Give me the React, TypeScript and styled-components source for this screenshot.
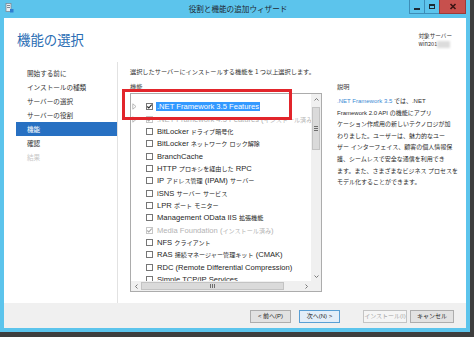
import styled, { createGlobalStyle } from 'styled-components';

const GlobalStyle = createGlobalStyle`
  html, body {
    margin: 0;
    padding: 0;
  }
  body {
    background: #3e3e3e;
    width: 474px;
    height: 337px;
    overflow: hidden;
    font-family: 'Liberation Sans', 'Noto Sans CJK JP', sans-serif;
    color: #2b2b2b;
  }
`;

type Feature = {
  label: string;
  expand?: boolean;
  checked?: boolean;
  disabled?: boolean;
  selected?: boolean;
};

const features: Feature[] = [
  { label: '.NET Framework 3.5 Features', expand: true, checked: true, selected: true },
  { label: '.NET Framework 4.5 Features (インストール済み)', expand: true, checked: true, disabled: true },
  { label: 'BitLocker ドライブ暗号化' },
  { label: 'BitLocker ネットワーク ロック解除' },
  { label: 'BranchCache' },
  { label: 'HTTP プロキシを経由した RPC' },
  { label: 'IP アドレス管理 (IPAM) サーバー' },
  { label: 'iSNS サーバー サービス' },
  { label: 'LPR ポート モニター' },
  { label: 'Management OData IIS 拡張機能' },
  { label: 'Media Foundation (インストール済み)', checked: true, disabled: true },
  { label: 'NFS クライアント' },
  { label: 'RAS 接続マネージャー管理キット (CMAK)' },
  { label: 'RDC (Remote Differential Compression)' },
  { label: 'Simple TCP/IP Services' },
];

const steps = ['開始する前に', 'インストールの種類', 'サーバーの選択', 'サーバーの役割', '機能', '確認', '結果'];

// japanese runs render narrower than latin in the original UI font
const mixed = (s: string) =>
  s.split(/([\u3000-\u30ff\u4e00-\u9fff\uff00-\uffef]+)/).map((part, i) =>
    i % 2 ? <Jp key={i}>{part}</Jp> : part
  );

const Chevron = ({ dir }: { dir: 'up' | 'down' | 'left' | 'right' }) => {
  const pts = {
    up: '1.5,4.5 3.5,2.5 5.5,4.5',
    down: '1.5,2.5 3.5,4.5 5.5,2.5',
    left: '4.5,1.5 2.5,3.5 4.5,5.5',
    right: '2.5,1.5 4.5,3.5 2.5,5.5',
  }[dir];
  return (
    <svg width="7" height="7" viewBox="0 0 7 7">
      <polyline points={pts} fill="none" stroke="#6b6b6b" strokeWidth="0.9" />
    </svg>
  );
};

const CheckBox = ({ checked, disabled }: { checked?: boolean; disabled?: boolean }) => (
  <Box $disabled={disabled}>
    {checked && (
      <svg width="7" height="7" viewBox="0 0 7 7">
        <path
          d="M1.3 3.5 L2.8 5 L5.7 1.6"
          fill="none"
          stroke={disabled ? '#a8a8a8' : '#222'}
          strokeWidth="1.1"
        />
      </svg>
    )}
  </Box>
);

export default function App() {
  return (
    <>
      <GlobalStyle />
      <Window>
        <TitleBar>
          <AppIcon width="9" height="10" viewBox="0 0 9 10">
            <rect x="1" y="0.5" width="5" height="8" fill="#e9eef2" stroke="#7d8a96" strokeWidth="0.8" />
            <rect x="2" y="2" width="3" height="1" fill="#7d8a96" />
            <rect x="2" y="4" width="3" height="1" fill="#7d8a96" />
            <rect x="5" y="6" width="3.5" height="3.5" fill="#2f7fd1" />
          </AppIcon>
          <Title>役割と機能の追加ウィザード</Title>
          <Controls>
            <CtrlButton>
              <MinGlyph />
            </CtrlButton>
            <CtrlButton>
              <MaxGlyph />
            </CtrlButton>
            <CloseButton>
              <svg width="8" height="7" viewBox="0 0 8 7">
                <path d="M1.5 1 L6.5 6 M6.5 1 L1.5 6" stroke="#3a1414" strokeWidth="1.6" />
              </svg>
            </CloseButton>
          </Controls>
        </TitleBar>

        <Client>
          <Header>
            <PageTitle>機能の選択</PageTitle>
            <Target>
              <div>対象サーバー</div>
              <div>
                win201<Redacted />
              </div>
            </Target>
          </Header>

          <Body>
            <Nav>
              {steps.map((s, i) => (
                <NavItem key={s} $active={i === 4} $muted={i === 6}>
                  {s}
                </NavItem>
              ))}
            </Nav>

            <Main>
              <Intro>選択したサーバーにインストールする機能を 1 つ以上選択します。</Intro>
              <Columns>
                <div>
                  <Label>機能</Label>
                  <ListFrame>
                    <Viewport>
                      {features.map((f) => (
                        <Row key={f.label}>
                          <Expander>
                            {f.expand && (
                              <svg width="5" height="7" viewBox="0 0 5 7">
                                <polygon points="0.8,0.8 4,3.5 0.8,6.2" fill="none" stroke="#a9a9a9" strokeWidth="0.8" />
                              </svg>
                            )}
                          </Expander>
                          <CheckBox checked={f.checked} disabled={f.disabled} />
                          <ItemText $disabled={f.disabled} $selected={f.selected}>
                            {mixed(f.label)}
                          </ItemText>
                        </Row>
                      ))}
                    </Viewport>
                    <VScroll>
                      <ScrollArrow>
                        <Chevron dir="up" />
                      </ScrollArrow>
                      <VTrack>
                        <VThumb>
                          <Grip />
                        </VThumb>
                      </VTrack>
                      <ScrollArrow>
                        <Chevron dir="down" />
                      </ScrollArrow>
                    </VScroll>
                    <HScroll>
                      <ScrollArrow>
                        <Chevron dir="left" />
                      </ScrollArrow>
                      <HTrack>
                        <HThumb>
                          <HGrip />
                        </HThumb>
                      </HTrack>
                      <ScrollArrow>
                        <Chevron dir="right" />
                      </ScrollArrow>
                    </HScroll>
                    <Corner />
                  </ListFrame>
                </div>

                <div>
                  <Label>説明</Label>
                  <Description>
                    <Link>.NET Framework 3.5</Link> では、.NET
                    <br />
                    Framework 2.0 API の機能にアプリ
                    <br />
                    ケーション作成用の新しいテクノロジが加
                    <br />
                    わりました。ユーザーは、魅力的なユー
                    <br />
                    ザー インターフェイス、顧客の個人情報保
                    <br />
                    護、シームレスで安全な通信を利用でき
                    <br />
                    ます。また、さまざまなビジネス プロセスを
                    <br />
                    モデル化することができます。
                  </Description>
                </div>

                <Callout />
              </Columns>
            </Main>
          </Body>

          <Footer>
            <ButtonGroup $gap={8}>
              <Button>&lt; 前へ(P)</Button>
              <Button $primary>次へ(N) &gt;</Button>
            </ButtonGroup>
            <ButtonGroup $gap={3}>
              <Button $disabled $wide>
                インストール(I)
              </Button>
              <Button $wide>キャンセル</Button>
            </ButtonGroup>
          </Footer>
        </Client>
      </Window>
    </>
  );
}

const Window = styled.div`
  width: 470px;
  height: 332px;
  box-sizing: border-box;
  padding: 0 4px 4px;
  background: #5cc4ec;
  display: flex;
  flex-direction: column;
`;

const TitleBar = styled.div`
  height: 18px;
  display: grid;
  grid-template-columns: 1fr auto 1fr;
  align-items: start;
`;

const AppIcon = styled.svg`
  margin: 3px 0 0 1px;
`;

const Title = styled.div`
  font-family: 'Noto Sans CJK JP', sans-serif;
  font-size: 7.6px;
  line-height: 18px;
  color: #1f2a33;
  margin-left: 6px;
`;

const Controls = styled.div`
  justify-self: end;
  display: flex;
`;

const CtrlButton = styled.div`
  width: 16px;
  height: 14px;
  box-sizing: border-box;
  border: 1px solid #3d8db7;
  border-top: none;
  margin-right: -1px;
  display: flex;
  align-items: center;
  justify-content: center;
  background: #5cc4ec;
`;

const CloseButton = styled(CtrlButton)`
  width: 27px;
  margin-right: 0;
  background: #c7504d;
  border-color: #9b3a38;
`;

const MinGlyph = styled.span`
  width: 6px;
  height: 2px;
  margin-top: 4px;
  background: #1d2b33;
`;

const MaxGlyph = styled.span`
  width: 6px;
  height: 5px;
  box-sizing: border-box;
  border: 1px solid #1d2b33;
  border-top-width: 2px;
`;

const Client = styled.div`
  flex: 1;
  background: #fff;
  display: flex;
  flex-direction: column;
`;

const Header = styled.div`
  height: 44px;
  display: flex;
  justify-content: space-between;
  padding: 0 14px 0 13px;
`;

const PageTitle = styled.h1`
  margin: 12px 0 0;
  font-family: 'Noto Sans CJK JP', sans-serif;
  font-weight: 400;
  font-size: 13.4px;
  line-height: 18px;
  color: #2a6db4;
`;

const Target = styled.div`
  margin-top: 15px;
  font-family: 'Noto Sans CJK JP', sans-serif;
  font-size: 5.6px;
  line-height: 7.5px;
  color: #333;
`;

const Redacted = styled.span`
  display: inline-block;
  width: 13px;
  height: 7px;
  vertical-align: middle;
  background: #dcdcdc;
  filter: blur(1px);
`;

const Body = styled.div`
  flex: 1;
  display: flex;
`;

const Nav = styled.div`
  width: 114px;
  flex: none;
  box-sizing: border-box;
  padding: 4px 0 0 12px;
  border-right: 1px solid #e2e2e2;
`;

const NavItem = styled.div<{ $active?: boolean; $muted?: boolean }>`
  height: 14px;
  line-height: 14px;
  padding-left: 11px;
  font-family: 'Noto Sans CJK JP', sans-serif;
  font-size: 6.6px;
  color: ${(p) => (p.$active ? '#fff' : p.$muted ? '#c9c9c9' : '#333')};
  background: ${(p) => (p.$active ? '#2770c2' : 'transparent')};
`;

const Main = styled.div`
  flex: 1;
  padding: 4px 11px 0 12px;
`;

const Intro = styled.div`
  font-family: 'Noto Sans CJK JP', sans-serif;
  font-size: 6.2px;
  line-height: 12px;
  color: #333;
`;

const Columns = styled.div`
  position: relative;
  margin-top: 2px;
  display: grid;
  grid-template-columns: 192px 1fr;
  column-gap: 15px;
`;

const Label = styled.div`
  font-family: 'Noto Sans CJK JP', sans-serif;
  font-size: 6.2px;
  line-height: 13px;
  color: #444;
`;

const ListFrame = styled.div`
  height: 199px;
  box-sizing: border-box;
  border: 1px solid #acacac;
  display: grid;
  grid-template-columns: 1fr 10px;
  grid-template-rows: 1fr 10px;
`;

const Viewport = styled.div`
  overflow: hidden;
  padding-top: 6.5px;
`;

const Row = styled.div`
  height: 12.35px;
  display: flex;
  align-items: center;
  white-space: nowrap;
`;

const Expander = styled.span`
  width: 14px;
  flex: none;
  display: flex;
  padding-left: 1px;
`;

const Box = styled.span<{ $disabled?: boolean }>`
  width: 7px;
  height: 7px;
  flex: none;
  box-sizing: border-box;
  border: 1px solid ${(p) => (p.$disabled ? '#c6c6c6' : '#767676')};
  background: #fff;
  margin-right: 4px;
  display: flex;
  align-items: center;
  justify-content: center;
  svg {
    margin: -1px;
  }
`;

const ItemText = styled.span<{ $disabled?: boolean; $selected?: boolean }>`
  font-size: 7.6px;
  line-height: 9px;
  padding: 0 1px;
  margin-left: -1px;
  color: ${(p) => (p.$selected ? '#fff' : p.$disabled ? '#b3b3b3' : '#262626')};
  background: ${(p) => (p.$selected ? '#3399ff' : 'transparent')};
`;

const Jp = styled.span`
  font-family: 'Noto Sans CJK JP', sans-serif;
  font-size: 6.1px;
`;

const VScroll = styled.div`
  background: #f0f0f0;
  display: flex;
  flex-direction: column;
`;

const HScroll = styled.div`
  background: #f0f0f0;
  display: flex;
`;

const ScrollArrow = styled.div`
  width: 10px;
  height: 10px;
  flex: none;
  display: flex;
  align-items: center;
  justify-content: center;
`;

const VTrack = styled.div`
  flex: 1;
  padding: 3px 1px 0;
`;

const VThumb = styled.div`
  height: 43px;
  box-sizing: border-box;
  border: 1px solid #c3c3c3;
  background: #dadada;
  display: flex;
  align-items: center;
  justify-content: center;
`;

const Grip = styled.span`
  width: 4px;
  height: 5px;
  background: repeating-linear-gradient(#6e6e6e 0 1px, transparent 1px 2px);
`;

const HTrack = styled.div`
  flex: 1;
  padding: 1px 0;
`;

const HThumb = styled.div`
  width: 143px;
  height: 100%;
  box-sizing: border-box;
  border: 1px solid #c3c3c3;
  background: #dadada;
  display: flex;
  align-items: center;
  justify-content: center;
`;

const HGrip = styled.span`
  width: 5px;
  height: 4px;
  background: repeating-linear-gradient(90deg, #6e6e6e 0 1px, transparent 1px 2px);
`;

const Corner = styled.div`
  background: #f0f0f0;
`;

const Description = styled.div`
  margin-top: 3px;
  font-size: 6px;
  line-height: 11.6px;
  white-space: nowrap;
  color: #2b2b2b;
`;

const Link = styled.span`
  color: #3a8ad4;
`;

// red annotation drawn over the first list rows
const Callout = styled.div`
  position: absolute;
  left: -8px;
  top: 9px;
  width: 170px;
  height: 31px;
  box-sizing: border-box;
  border: 3px solid #e2252b;
  pointer-events: none;
`;

const Footer = styled.div`
  height: 25px;
  background: #f0f0f0;
  display: flex;
  align-items: center;
  justify-content: flex-end;
  gap: 23px;
  padding: 2px 12px 0 0;
  box-sizing: border-box;
`;

const ButtonGroup = styled.div<{ $gap: number }>`
  display: flex;
  gap: ${(p) => p.$gap}px;
`;

const Button = styled.div<{ $primary?: boolean; $disabled?: boolean; $wide?: boolean }>`
  width: ${(p) => (p.$wide ? '44px' : '41px')};
  height: 13px;
  box-sizing: border-box;
  border: 1px solid ${(p) => (p.$primary ? '#5a9fd4' : p.$disabled ? '#c4c4c4' : '#adadad')};
  background: ${(p) => (p.$primary ? '#e3eef9' : p.$disabled ? '#f5f5f5' : '#e2e2e2')};
  color: ${(p) => (p.$disabled ? '#a5a5a5' : '#222')};
  font-size: 6px;
  line-height: 11px;
  text-align: center;
  white-space: nowrap;
`;
